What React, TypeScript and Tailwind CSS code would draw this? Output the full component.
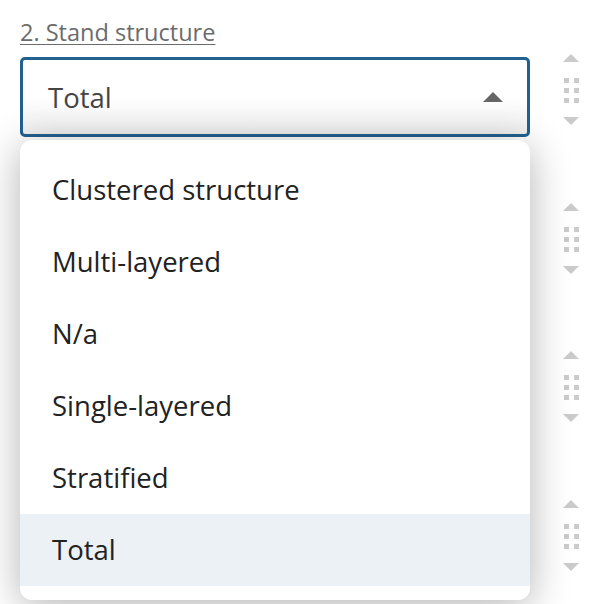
import React from "react";

const items = ["Clustered structure", "Multi-layered", "N/a", "Single-layered", "Stratified", "Total"];

function Handle() {
  return (
    <div className="flex flex-col items-center w-[16px]">
      <div className="w-0 h-0 border-l-[8px] border-r-[8px] border-b-[8px] border-l-transparent border-r-transparent border-b-[#cbcbcb]" />
      <div className="grid grid-cols-2 gap-[5px] mt-[16px]">
        {Array.from({ length: 6 }).map((_, i) => (
          <div key={i} className="w-[5px] h-[5px] bg-[#cbcbcb]" />
        ))}
      </div>
      <div className="w-0 h-0 mt-[14px] border-l-[8px] border-r-[8px] border-t-[8px] border-l-transparent border-r-transparent border-t-[#cbcbcb]" />
    </div>
  );
}

export default function App() {
  return (
    <div className="relative w-[594px] h-[604px] bg-white overflow-hidden font-['Open_Sans',sans-serif]">
      <div className="flex flex-col">
        {[0, 1, 2, 3].map((r) => (
          <div key={r} className="flex h-[148.5px] shrink-0">
            <div className="w-[510px] ml-5">
              {r === 0 && (
                <>
                  <div className="pt-[16px] h-[57px] text-[23.5px] leading-[32px] text-[#6b6b6b] underline underline-offset-[3px] decoration-1">
                    2. Stand structure
                  </div>
                  <div className="h-[80px] rounded-[5px] border-[3px] border-[#22618f] bg-gradient-to-b from-white from-50% to-[#f0f0f0] flex items-center justify-between pl-[25px] pr-[24px]">
                    <span className="text-[27.5px] text-[#444] leading-none pt-[2px]">Total</span>
                    <div className="w-0 h-0 border-l-[10px] border-r-[10px] border-b-[10px] border-l-transparent border-r-transparent border-b-[#666]" />
                  </div>
                </>
              )}
            </div>
            <div className="ml-[33px] pt-[54px]">
              <Handle />
            </div>
          </div>
        ))}
      </div>

      <div className="absolute left-5 top-[140px] w-[510px] bg-white rounded-[12px] shadow-[0_6px_40px_rgba(0,0,0,0.3)] py-[14px]">
        {items.map((it) => (
          <div
            key={it}
            className={`h-[72px] flex items-center pl-[32px] text-[27.5px] text-[#222] ${it === "Total" ? "bg-[#ebf1f5]" : ""}`}
          >
            {it}
          </div>
        ))}
      </div>
    </div>
  );
}
